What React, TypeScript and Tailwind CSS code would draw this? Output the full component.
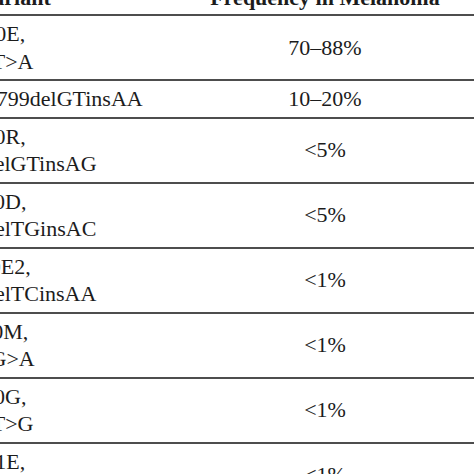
const rows = [
  { variant: ["p.V600E,", "c.1799T>A"], freq: "70–88%" },
  { variant: ["p.V600K, c.1798_1799delGTinsAA"], freq: "10–20%" },
  { variant: ["p.V600R,", "c.1798_1799delGTinsAG"], freq: "<5%" },
  { variant: ["p.V600D,", "c.1799_1800delTGinsAC"], freq: "<5%" },
  { variant: ["p.V600E2,", "c.1799_1800delTCinsAA"], freq: "<1%" },
  { variant: ["p.V600M,", "c.1798G>A"], freq: "<1%" },
  { variant: ["p.V600G,", "c.1799T>G"], freq: "<1%" },
  { variant: ["p.K601E,", "c.1801A>G"], freq: "<1%" },
];

export default function App() {
  return (
    <div className="w-[474px] h-[474px] overflow-hidden bg-white text-[#1c1c1c] font-['Liberation_Serif',serif] text-[22px]">
      <div className="-mt-[16px] -ml-[210px] w-[684px]">
        <div className="grid grid-cols-[386px_298px] border-b-2 border-[#4d4d4d] font-bold leading-[28px]">
          <div className="pb-[2px] text-center whitespace-nowrap">BRAF Variant</div>
          <div className="pb-[2px] text-center whitespace-nowrap">Frequency in Melanoma</div>
        </div>
        {rows.map((row, i) => (
          <div
            key={i}
            className="grid grid-cols-[386px_298px] border-b-2 border-[#4d4d4d] leading-[27.5px]"
          >
            <div className="py-[4px] text-center whitespace-nowrap">
              {row.variant.map((line) => (
                <div key={line}>{line}</div>
              ))}
            </div>
            <div className="py-[4px] flex items-center justify-center whitespace-nowrap">
              {row.freq}
            </div>
          </div>
        ))}
      </div>
    </div>
  );
}
